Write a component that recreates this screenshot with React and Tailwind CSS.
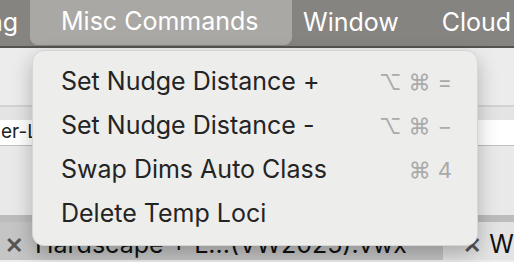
import React from "react";

const items = [
  { label: "Set Nudge Distance +", keys: ["⌥", "⌘", "="] },
  { label: "Set Nudge Distance -", keys: ["⌥", "⌘", "−"] },
  { label: "Swap Dims Auto Class", keys: ["⌘", "4"] },
  { label: "Delete Temp Loci", keys: [] },
];

export default function App() {
  return (
    <div
      className="relative w-[514px] h-[262px] overflow-hidden bg-[#ececec]"
      style={{ fontFamily: "Inter, 'Noto Sans', sans-serif" }}
    >
      {/* MENU BAR */}
      <div className="flex items-center h-12 bg-[#858480] border-b-2 border-[#55534f] text-white text-[25px] whitespace-nowrap">
        <span className="w-[30px] -ml-[12px]">ng</span>
        <div className="flex items-center h-[46px] w-[262px] ml-[12px] -mt-[2px] pl-[31px] rounded-b-lg bg-[#a9a8a4]">
          Misc Commands
        </div>
        <span className="ml-[11px]">Window</span>
        <span className="ml-[43px]">Cloud</span>
      </div>

      {/* BACKGROUND WINDOW */}
      <div className="h-[57px]" />
      <div className="h-[2px] bg-[#d2d2d2]" />
      <div className="h-[13px] bg-[#e4e4e4]" />
      <div className="flex items-center h-[26px] bg-white border-b border-[#bfbfbf] text-[19px] text-[#222] whitespace-nowrap pl-[1px]">
        er-L
      </div>
      <div className="h-[69px] bg-[#e9e9e9]" />
      <div className="h-[7px] bg-[#bcbcbc]" />
      <div className="flex h-[38px] text-[25px] text-[#111] whitespace-nowrap">
        <div className="flex items-center gap-[12px] w-[445px] pl-[5px] bg-[#c5c5c5] pt-[8px]">
          <span className="text-[#555] text-[22px] font-bold">✕</span>
          <span>Hardscape + L...(VW2025).vwx</span>
        </div>
        <div className="flex items-center gap-[8px] pl-[20px] bg-[#e3e3e3] pt-[8px] flex-1">
          <span className="text-[#555] text-[22px] font-bold">✕</span>
          <span>W</span>
        </div>
      </div>

      {/* DROPDOWN MENU */}
      <div className="absolute left-[32px] top-[50px] w-[446px] h-[196px] rounded-xl bg-[#ededeb] border border-[#d6d6d4] shadow-[0_8px_20px_rgba(0,0,0,0.25)] pt-[9px]">
        {items.map((item) => (
          <div key={item.label} className="flex items-center justify-between h-[44px] pl-[28px] pr-[25px]">
            <span className="text-[25px] text-[#242424]">{item.label}</span>
            <span className="flex gap-[7px] text-[22px] text-[#aaaaaa]">
              {item.keys.map((k, i) => (
                <span key={i}>{k}</span>
              ))}
            </span>
          </div>
        ))}
      </div>
    </div>
  );
}
